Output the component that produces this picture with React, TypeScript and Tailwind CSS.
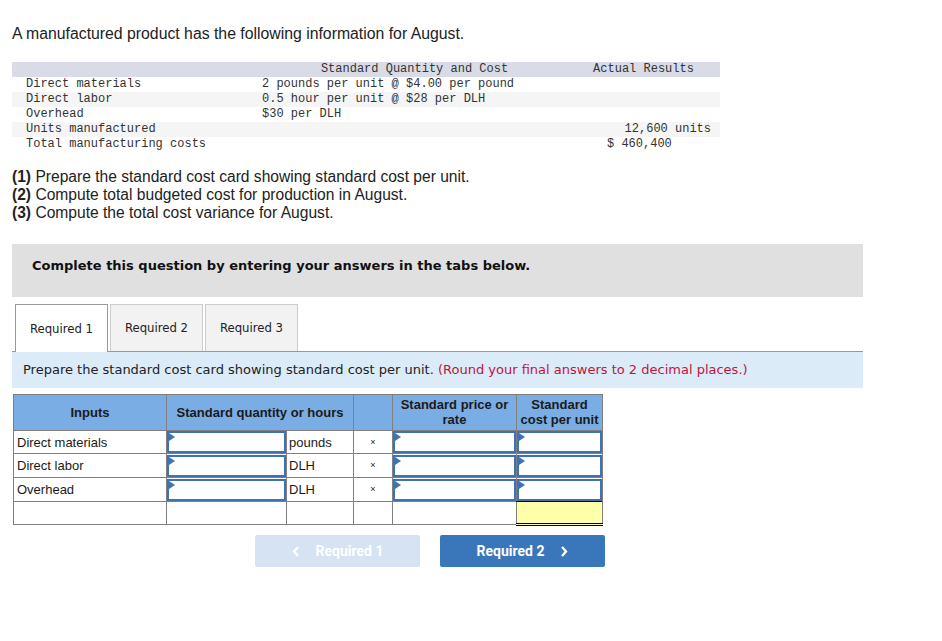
import React from 'react';

const mono = { fontFamily: '"Liberation Mono", "DejaVu Sans Mono", monospace' };

const infoRows = [
  { label: 'Direct materials', std: '2 pounds per unit @ $4.00 per pound', actual: '', shade: false },
  { label: 'Direct labor', std: '0.5 hour per unit @ $28 per DLH', actual: '', shade: true },
  { label: 'Overhead', std: '$30 per DLH', actual: '', shade: false },
  { label: 'Units manufactured', std: '', actual: 'units', shade: true },
  { label: 'Total manufacturing costs', std: '', actual: 'cost', shade: false },
];

function InputCell({ h }: { h: string }) {
  return (
    <td className={`border border-[#808080] p-0 ${h}`}>
      <div className="relative h-[22px] border-2 border-[#3f72b3] bg-white">
        <svg className="absolute left-0 top-0" width="6" height="8" viewBox="0 0 6 8">
          <polygon points="0,0 6,4 0,8" fill="#3f72b3" />
        </svg>
      </div>
    </td>
  );
}

const answerRows = [
  { label: 'Direct materials', unit: 'pounds', h: 'h-[23px]' },
  { label: 'Direct labor', unit: 'DLH', h: 'h-[24px]' },
  { label: 'Overhead', unit: 'DLH', h: 'h-[24px]' },
];

export default function App() {
  const tahoma = 'font-["Tahoma","DejaVu_Sans_Condensed","DejaVu_Sans",sans-serif]';
  const verdana = 'font-["Verdana","DejaVu_Sans",sans-serif]';
  return (
    <div className="w-[942px] h-[641px] bg-white text-[#222] font-['Liberation_Sans',Arial,sans-serif]">
      <div className="pl-3 pt-[25px]">
        <p className="text-[15.8px] leading-[18px]">A manufactured product has the following information for August.</p>

        {/* given data */}
        <div className="mt-[19px] w-[708px] text-[12px] leading-[15px] text-[#333]" style={mono}>
          <div className="grid grid-cols-[250px_305px_153px] bg-[#d9dce6] h-[15px]">
            <div />
            <div className="text-center">Standard Quantity and Cost</div>
            <div className="text-center">Actual Results</div>
          </div>
          {infoRows.map((r) => (
            <div key={r.label} className={`grid grid-cols-[250px_305px_153px] h-[15px] ${r.shade ? 'bg-[#f5f5f5]' : 'bg-white'}`}>
              <div className="pl-[14px] whitespace-pre">{r.label}</div>
              <div className="whitespace-pre">{r.std}</div>
              <div className="whitespace-pre">
                {r.actual === 'units' && <div className="text-right pr-[9px]">12,600 units</div>}
                {r.actual === 'cost' && <div className="pl-[40px]">$ 460,400</div>}
              </div>
            </div>
          ))}
        </div>

        <div className="mt-[16px] text-[15.6px] leading-[18px]">
          <p><b>(1)</b> Prepare the standard cost card showing standard cost per unit.</p>
          <p><b>(2)</b> Compute total budgeted cost for production in August.</p>
          <p><b>(3)</b> Compute the total cost variance for August.</p>
        </div>

        <div className={`mt-[22px] w-[851px] h-[53px] bg-[#e0e0e0] pl-5 pt-[14px] text-[13px] leading-[16px] font-bold text-[#111] ${verdana}`}>
          Complete this question by entering your answers in the tabs below.
        </div>

        {/* tabs */}
        <div className={`mt-[7px] w-[851px] flex items-end gap-[2px] pl-[3px] border-b border-[#999] h-[48px] ${tahoma} text-[13px]`}>
          <div className="w-[93px] h-[48px] -mb-px bg-white border border-b-0 border-[#999] flex items-center justify-center text-[#222]">Required 1</div>
          <div className="w-[93px] h-[47px] bg-[#f2f2f2] border border-b-0 border-[#ccc] flex items-center justify-center text-[#222]">Required 2</div>
          <div className="w-[93px] h-[47px] bg-[#f2f2f2] border border-b-0 border-[#ccc] flex items-center justify-center text-[#222]">Required 3</div>
        </div>
        <div className={`w-[851px] h-[36px] bg-[#dcebf8] flex items-center pl-[11px] text-[13px] text-[#222] ${verdana}`}>
          Prepare the standard cost card showing standard cost per unit.&nbsp;<span className="text-[#c0143c]">(Round your final answers to 2 decimal places.)</span>
        </div>

        {/* answer table */}
        <table className="mt-[6px] ml-px border-collapse text-[13px] leading-[15px] text-[#1a1a1a]">
          <colgroup>
            <col className="w-[153px]" />
            <col className="w-[120px]" />
            <col className="w-[67px]" />
            <col className="w-[39px]" />
            <col className="w-[124px]" />
            <col className="w-[86px]" />
          </colgroup>
          <thead>
            <tr className="bg-[#7aade4] h-[36px]">
              <th className="border border-[#808080] font-bold">Inputs</th>
              <th colSpan={2} className="border border-[#808080] font-bold">Standard quantity or hours</th>
              <th className="border border-[#808080]" />
              <th className="border border-[#808080] font-bold align-top pt-[2px]">Standard price or<br />rate</th>
              <th className="border border-[#808080] font-bold align-top pt-[2px]">Standard<br />cost per unit</th>
            </tr>
          </thead>
          <tbody>
            {answerRows.map((r) => (
              <tr key={r.label}>
                <td className={`border border-[#808080] pl-[3px] ${r.h}`}>{r.label}</td>
                <InputCell h={r.h} />
                <td className="border border-[#808080] pl-[2px]">{r.unit}</td>
                <td className="border border-[#808080] text-center text-[9px]">×</td>
                <InputCell h={r.h} />
                <InputCell h={r.h} />
              </tr>
            ))}
            <tr className="h-[23px]">
              <td className="border border-[#808080]" />
              <td className="border border-[#808080]" />
              <td className="border border-[#808080]" />
              <td className="border border-[#808080]" />
              <td className="border border-[#808080]" />
              <td className="border border-[#808080] border-t-black border-b-[3px] border-b-black border-double bg-[#ffffaa]" />
            </tr>
          </tbody>
        </table>

        {/* navigation */}
        <div className="mt-[9px] ml-[243px] flex gap-5 font-['Roboto',sans-serif] font-bold text-[14px] text-white">
          <button className="w-[165px] h-[32px] rounded-[2px] bg-[#d6e3f2] flex items-center justify-center gap-4">
            <svg width="8" height="11" viewBox="0 0 8 11"><polyline points="6,1 2,5.5 6,10" fill="none" stroke="white" strokeWidth="2.4" /></svg>
            Required 1
          </button>
          <button className="w-[165px] h-[32px] rounded-[2px] bg-[#3a76ba] flex items-center justify-center gap-4">
            Required 2
            <svg width="8" height="11" viewBox="0 0 8 11"><polyline points="2,1 6,5.5 2,10" fill="none" stroke="white" strokeWidth="2.4" /></svg>
          </button>
        </div>
      </div>
    </div>
  );
}
